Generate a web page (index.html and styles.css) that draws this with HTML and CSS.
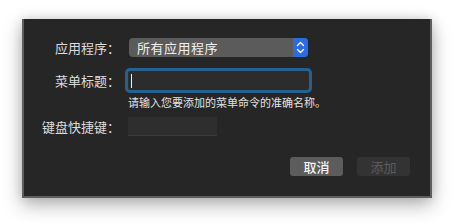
FILE: index.html
```html
<!DOCTYPE html>
<html lang="zh">
<head>
<meta charset="utf-8">
<link rel="stylesheet" href="styles.css">
</head>
<body>
<div class="dialog">
  <div class="form">
    <div class="row">
      <div class="label">应用程序：</div>
      <div class="popup">
        <span class="popup-text">所有应用程序</span>
        <span class="popup-arrows">
          <svg width="15" height="19" viewBox="0 0 15 19"><path d="M4.5 7.5 L7.5 4.5 L10.5 7.5 M4.5 11.5 L7.5 14.5 L10.5 11.5" fill="none" stroke="#fff" stroke-width="1.4" stroke-linecap="round" stroke-linejoin="round"/></svg>
        </span>
      </div>
    </div>
    <div class="row row-title">
      <div class="label">菜单标题：</div>
      <div class="field focused"><span class="caret"></span></div>
    </div>
    <div class="row row-help">
      <div class="label"></div>
      <div class="help">请输入您要添加的菜单命令的准确名称。</div>
    </div>
    <div class="row row-key">
      <div class="label">键盘快捷键：</div>
      <div class="field shortcut"></div>
    </div>
    <div class="buttons">
      <div class="btn btn-cancel">取消</div>
      <div class="btn btn-add">添加</div>
    </div>
  </div>
</div>
</body>
</html>
```
FILE: styles.css
```css
html, body {
  margin: 0;
  padding: 0;
  background: #ffffff;
}
body {
  width: 454px;
  height: 224px;
  overflow: hidden;
  font-family: "Noto Sans CJK SC", "Noto Sans", sans-serif;
}
.dialog {
  margin-left: 22px;
  margin-top: 19px;
  width: 406px;
  height: 177px;
  background: #262626;
  border: 2px solid #5e5e5e;
  border-top: none;
  box-shadow: 0 7px 18px rgba(0, 0, 0, 0.3), 0 0 10px rgba(0, 0, 0, 0.12);
}
.form {
  padding-top: 19px;
  padding-right: 20px;
}
.row {
  display: flex;
  align-items: center;
  gap: 9px;
}
.label {
  width: 96px;
  flex: none;
  text-align: right;
  color: #dcdcdc;
  font-size: 13px;
  line-height: 19px;
}
.popup {
  width: 179px;
  height: 19px;
  border-radius: 4px;
  background: #5b5b5b;
  display: flex;
  align-items: center;
  justify-content: space-between;
  overflow: hidden;
}
.popup-text {
  color: #f0f0f0;
  font-size: 13px;
  line-height: 19px;
  padding-left: 8px;
  letter-spacing: 0.5px;
}
.popup-arrows {
  width: 15px;
  height: 19px;
  background: #2a6de0;
  display: flex;
}
.row-title {
  margin-top: 14px;
}
.field {
  height: 19px;
  background: #2c2c2c;
  box-sizing: border-box;
}
.field.focused {
  width: 181px;
  margin-left: -1px;
  border-radius: 2px;
  box-shadow: 0 0 0 3px #27618e;
  display: flex;
  align-items: center;
  padding-left: 3px;
}
.caret {
  width: 1px;
  height: 14px;
  background: #f0f0f0;
}
.row-help {
  margin-top: 5px;
}
.row-help .label {
  line-height: 14px;
}
.help {
  margin-left: -1px;
  color: #e2e2e2;
  font-size: 11px;
  line-height: 14px;
}
.row-key {
  margin-top: 8px;
}
.field.shortcut {
  width: 89px;
  margin-left: -1px;
  background: #2e2e2e;
  border-bottom: 1px solid #3c3c3c;
}
.buttons {
  margin-top: 21px;
  display: flex;
  justify-content: flex-end;
  gap: 14px;
}
.btn {
  width: 53px;
  height: 19px;
  border-radius: 3px;
  text-align: center;
  font-size: 13px;
  line-height: 19px;
}
.btn-cancel {
  background: #5c5c5c;
  color: #f4f4f4;
  font-weight: 500;
}
.btn-add {
  background: #333333;
  color: #5c5c5c;
}
```
